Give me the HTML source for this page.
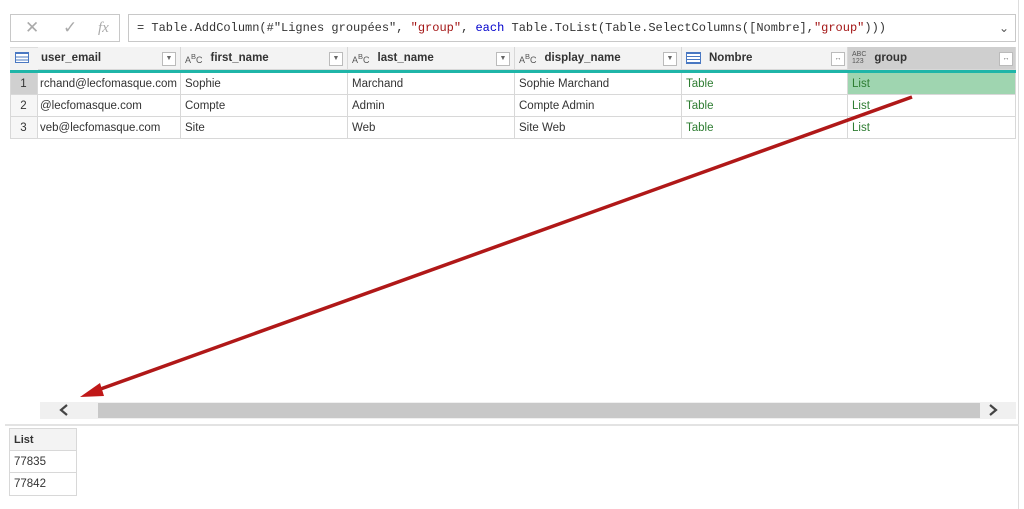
<!DOCTYPE html>
<html><head><style>
body{margin:0;width:1024px;height:509px;background:#fff;position:relative;overflow:hidden;font-family:"Liberation Sans",sans-serif;font-size:11.5px;color:#333}
.a{position:absolute;box-sizing:border-box}
.mono{font-family:"Liberation Mono",monospace;font-size:12px}
.cell{position:absolute;box-sizing:border-box;border-right:1px solid #d8d8d8;border-bottom:1px solid #d8d8d8;padding-left:4px;line-height:22px;white-space:nowrap;overflow:hidden}
.h{font-weight:bold;background:#f3f3f3;display:flex;align-items:center;line-height:14px}
.ic{font-weight:normal;font-size:9px;color:#555;margin-right:8px}
.dd{position:absolute;top:5px;width:12px;height:12px;border:1px solid #bbb;background:#fff;font-size:7px;line-height:12px;text-align:center;color:#666}
.g{color:#2e7d32}
</style></head><body>
<div class="a" style="left:0;top:0;width:1019px;height:509px;border-right:1px solid #ddd"></div>
<div class="a" style="left:10px;top:14px;width:110px;height:28px;border:1px solid #c8c8c8;color:#aaa;font-size:17px;line-height:26px">
<span style="position:absolute;left:14px">✕</span><span style="position:absolute;left:52px">✓</span><span style="position:absolute;left:87px;font-family:'Liberation Serif';font-style:italic;font-size:15px">fx</span></div>
<div class="a mono" style="left:128px;top:14px;width:888px;height:28px;border:1px solid #c8c8c8;line-height:26px;padding-left:8px;color:#333">= Table.AddColumn(#"Lignes groupées", <span style="color:#a31515">"group"</span>, <span style="color:#00c">each</span> Table.ToList(Table.SelectColumns([Nombre],<span style="color:#a31515">"group"</span>)))<span style="position:absolute;right:6px;color:#555;font-family:'Liberation Sans'">⌄</span></div>
<div class="a" style="left:10px;top:47px;width:1006px;height:23px;background:#f3f3f3;border-top:1px solid #ddd"></div>
<div class="a" style="left:10px;top:70px;width:1006px;height:3px;background:#1fb5a8"></div>
<div class="a" style="left:15px;top:52px;width:14px;height:11px;border:1px solid #4a78c2;background:repeating-linear-gradient(#4a78c2 0 1px,#fff 1px 3.3px)"></div>
<div class="cell h" style="left:38px;top:47px;width:143px;height:23px;padding-left:3px">user_email<div class="dd" style="right:4px">▼</div></div>
<div class="cell h" style="left:181px;top:47px;width:167px;height:23px"><span class="ic">A<sup>B</sup>C</span>first_name<div class="dd" style="right:4px">▼</div></div>
<div class="cell h" style="left:348px;top:47px;width:167px;height:23px"><span class="ic">A<sup>B</sup>C</span>last_name<div class="dd" style="right:4px">▼</div></div>
<div class="cell h" style="left:515px;top:47px;width:167px;height:23px"><span class="ic">A<sup>B</sup>C</span>display_name<div class="dd" style="right:4px">▼</div></div>
<div class="cell h" style="left:682px;top:47px;width:166px;height:23px"><span style="display:inline-block;width:13px;height:10px;border:1px solid #4a78c2;margin-right:8px;background:repeating-linear-gradient(#4a78c2 0 1px,#fff 1px 3px)"></span>Nombre<div class="dd" style="right:2px">↔</div></div>
<div class="cell h" style="left:848px;top:47px;width:168px;height:23px;background:#cfcfcf"><span style="font-weight:normal;font-size:7px;color:#555;line-height:7px;margin-right:8px">ABC<br>123</span>group<div class="dd" style="right:2px">↔</div></div>
<div class="cell" style="left:10px;top:73px;width:28px;height:22px;background:#d0d0d0;text-align:center;padding:0">1</div>
<div class="cell" style="left:10px;top:95px;width:28px;height:22px;text-align:center;padding:0;background:#f6f6f6">2</div>
<div class="cell" style="left:10px;top:117px;width:28px;height:22px;text-align:center;padding:0;background:#f6f6f6">3</div>
<div class="cell" style="left:38px;top:73px;width:143px;height:22px;padding-left:2px">rchand@lecfomasque.com</div>
<div class="cell" style="left:38px;top:95px;width:143px;height:22px;padding-left:2px">@lecfomasque.com</div>
<div class="cell" style="left:38px;top:117px;width:143px;height:22px;padding-left:2px">veb@lecfomasque.com</div>
<div class="cell" style="left:181px;top:73px;width:167px;height:22px">Sophie</div>
<div class="cell" style="left:181px;top:95px;width:167px;height:22px">Compte</div>
<div class="cell" style="left:181px;top:117px;width:167px;height:22px">Site</div>
<div class="cell" style="left:348px;top:73px;width:167px;height:22px">Marchand</div>
<div class="cell" style="left:348px;top:95px;width:167px;height:22px">Admin</div>
<div class="cell" style="left:348px;top:117px;width:167px;height:22px">Web</div>
<div class="cell" style="left:515px;top:73px;width:167px;height:22px">Sophie Marchand</div>
<div class="cell" style="left:515px;top:95px;width:167px;height:22px">Compte Admin</div>
<div class="cell" style="left:515px;top:117px;width:167px;height:22px">Site Web</div>
<div class="cell g" style="left:682px;top:73px;width:166px;height:22px">Table</div>
<div class="cell g" style="left:682px;top:95px;width:166px;height:22px">Table</div>
<div class="cell g" style="left:682px;top:117px;width:166px;height:22px">Table</div>
<div class="cell g" style="left:848px;top:73px;width:168px;height:22px;background:#9fd5b0">List</div>
<div class="cell g" style="left:848px;top:95px;width:168px;height:22px">List</div>
<div class="cell g" style="left:848px;top:117px;width:168px;height:22px">List</div>
<div class="a" style="left:10px;top:73px;width:1px;height:66px;background:#d8d8d8"></div>
<div class="a" style="left:40px;top:402px;width:976px;height:17px;background:#f0f0f0"></div>
<div class="a" style="left:98px;top:403px;width:882px;height:15px;background:#c8c8c8"></div>
<svg class="a" style="left:0;top:0" width="1024" height="509">
<polyline points="67,405 61,410 67,415" fill="none" stroke="#444" stroke-width="2.2"/>
<polyline points="990,405 996,410 990,415" fill="none" stroke="#444" stroke-width="2.2"/>
</svg>
<div class="a" style="left:5px;top:424px;width:1014px;height:2px;background:#e3e3e3"></div>
<div class="cell h" style="left:9px;top:428px;width:68px;height:23px;border-left:1px solid #d8d8d8;border-top:1px solid #d8d8d8;font-size:11px">List</div>
<div class="cell" style="left:9px;top:451px;width:68px;height:22px;border-left:1px solid #d8d8d8">77835</div>
<div class="cell" style="left:9px;top:473px;width:68px;height:23px;border-left:1px solid #d8d8d8">77842</div>
<svg class="a" style="left:0;top:0" width="1024" height="509"><line x1="912" y1="97" x2="95" y2="391" stroke="#b01818" stroke-width="3.5"/><polygon points="80,397 100,383 104,396" fill="#c01818"/></svg>
</body></html>
